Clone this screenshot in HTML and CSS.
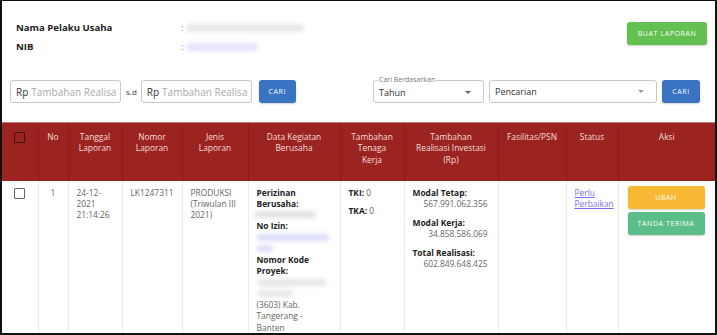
FILE: index.html
```html
<!DOCTYPE html>
<html lang="id">
<head>
    <meta charset="UTF-8">
    <meta name="viewport" content="width=device-width, initial-scale=1.0">
    <title>Laporan Kegiatan Penanaman Modal</title>
    <link rel="stylesheet" href="styles.css">
</head>
<body>
    <div class="frame">
        <div class="top">
            <div class="info">
                <div class="info-row">
                    <span class="info-label">Nama Pelaku Usaha</span>
                    <span class="info-colon">:</span>
                    <span class="bar bar-name"></span>
                </div>
                <div class="info-row">
                    <span class="info-label">NIB</span>
                    <span class="info-colon">:</span>
                    <span class="bar bar-nib"></span>
                </div>
            </div>
            <button class="btn btn-green btn-buat">BUAT LAPORAN</button>
        </div>

        <div class="filters">
            <div class="filter-left">
                <div class="money">
                    <span class="rp">Rp</span>
                    <input type="text" placeholder="Tambahan Realisasi">
                </div>
                <span class="sd">s.d</span>
                <div class="money">
                    <span class="rp">Rp</span>
                    <input type="text" placeholder="Tambahan Realisasi">
                </div>
                <button class="btn btn-blue">CARI</button>
            </div>
            <div class="filter-right">
                <fieldset class="select select-tahun">
                    <legend>Cari Berdasarkan</legend>
                    <span>Tahun</span>
                    <span class="caret caret-dark"></span>
                </fieldset>
                <div class="select select-cari">
                    <span>Pencarian</span>
                    <span class="caret"></span>
                </div>
                <button class="btn btn-blue btn-cari2">CARI</button>
            </div>
        </div>

        <table class="report">
            <colgroup>
                <col style="width: 36px">
                <col style="width: 30px">
                <col style="width: 54px">
                <col style="width: 60px">
                <col style="width: 66px">
                <col style="width: 92px">
                <col style="width: 64px">
                <col style="width: 94px">
                <col style="width: 68px">
                <col style="width: 52px">
                <col>
            </colgroup>
            <thead>
                <tr>
                    <th><span class="check check-head"></span></th>
                    <th>No</th>
                    <th>Tanggal<br>Laporan</th>
                    <th>Nomor<br>Laporan</th>
                    <th>Jenis<br>Laporan</th>
                    <th>Data Kegiatan<br>Berusaha</th>
                    <th>Tambahan<br>Tenaga<br>Kerja</th>
                    <th>Tambahan<br>Realisasi Investasi<br>(Rp)</th>
                    <th>Fasilitas/PSN</th>
                    <th>Status</th>
                    <th>Aksi</th>
                </tr>
            </thead>
            <tbody>
                <tr>
                    <td><span class="check"></span></td>
                    <td class="center">1</td>
                    <td>24-12-<br>2021<br>21:14:26</td>
                    <td>LK1247311</td>
                    <td>PRODUKSI (Triwulan III 2021)</td>
                    <td>
                        <b>Perizinan<br>Berusaha:</b>
                        <span class="line"><span class="bar bar-izin"></span></span>
                        <b>No Izin:</b>
                        <span class="line"><span class="bar bar-link"></span></span>
                        <span class="line"><span class="bar bar-link2"></span></span>
                        <b>Nomor Kode<br>Proyek:</b>
                        <span class="line"><span class="bar bar-kode"></span></span>
                        <span class="line"><span class="bar bar-kode2"></span></span>
                        <span class="place">(3603) Kab.<br>Tangerang -<br>Banten</span>
                    </td>
                    <td>
                        <div><b>TKI:</b> 0</div>
                        <div class="gap"><b>TKA:</b> 0</div>
                    </td>
                    <td>
                        <b>Modal Tetap:</b>
                        <div class="num">567.991.062.356</div>
                        <b class="gap">Modal Kerja:</b>
                        <div class="num">34.858.586.069</div>
                        <b class="gap">Total Realisasi:</b>
                        <div class="num">602.849.648.425</div>
                    </td>
                    <td></td>
                    <td><a href="#" class="status">Perlu Perbaikan</a></td>
                    <td class="actions">
                        <button class="btn btn-yellow">UBAH</button>
                        <button class="btn btn-teal">TANDA TERIMA</button>
                    </td>
                </tr>
            </tbody>
        </table>
    </div>
</body>
</html>
```

FILE: styles.css
```css
/* Page frame */
html, body {
    margin: 0;
    height: 100%;
}

body {
    font-family: "Open Sans", "Liberation Sans", sans-serif;
    color: #555;
    background: #fff;
}

.frame {
    box-sizing: border-box;
    height: 335px;
    border: 2px solid #111;
    border-top-width: 1px;
    overflow: hidden;
    background: #fff;
}

/* Business info */
.top {
    display: flex;
    justify-content: space-between;
    padding: 17px 8px 0 14px;
    height: 51px;
}

.info-row {
    display: flex;
    align-items: center;
    height: 19px;
    font-size: 9.6px;
}

.info-label {
    width: 165px;
    font-weight: 700;
    color: #222;
}

.info-colon {
    width: 5px;
    color: #888;
}

/* blurred (hidden) values */
.bar {
    display: inline-block;
    height: 8px;
    border-radius: 4px;
    filter: blur(2px);
    background: #e2e2e2;
}

.bar-name {
    width: 118px;
    background: #e6e6e6;
}

.bar-nib {
    width: 72px;
    background: #e3e3fb;
}

/* Buttons */
.btn {
    border: none;
    border-radius: 3px;
    color: #fff;
    font-family: inherit;
    font-size: 7px;
    letter-spacing: 0.6px;
    cursor: pointer;
    box-shadow: 0 1px 2px rgba(0, 0, 0, 0.2);
}

.btn-green {
    background: #62c150;
}

.btn-buat {
    width: 80px;
    height: 23px;
    margin-top: 4px;
}

.btn-blue {
    background: #3a73c2;
    width: 37px;
    height: 23px;
}

.btn-yellow {
    background: #f7b833;
}

.btn-teal {
    background: #5bbd87;
}

/* Filters */
.filters {
    display: flex;
    justify-content: space-between;
    align-items: flex-end;
    padding: 10px 15px 0 8px;
    height: 24px;
}

.filter-left, .filter-right {
    display: flex;
    align-items: center;
}

.money {
    display: flex;
    align-items: center;
    box-sizing: border-box;
    width: 111px;
    height: 23px;
    border: 1px solid #c8c8c8;
    border-radius: 3px;
    padding-left: 5px;
    overflow: hidden;
}

.rp {
    font-size: 10px;
    color: #333;
    margin-right: 3px;
}

.money input {
    border: none;
    outline: none;
    padding: 0;
    width: 86px;
    font-family: inherit;
    font-size: 10px;
    color: #333;
}

.money input::placeholder {
    color: #aaa;
}

.sd {
    font-size: 8px;
    margin: 0 4px 0 5px;
    color: #444;
}

.filter-left .btn-blue {
    margin-left: 7px;
}

.select {
    display: flex;
    align-items: center;
    justify-content: space-between;
    box-sizing: border-box;
    height: 23px;
    margin: 0;
    border: 1px solid #c8c8c8;
    border-radius: 3px;
    padding: 0 12px 0 5px;
    font-size: 9px;
    color: #333;
}

fieldset.select {
    position: relative;
    min-width: 0;
}

.select legend {
    position: absolute;
    top: -5px;
    left: 4px;
    padding: 0 1px;
    background: #fff;
    font-size: 7px;
    line-height: 8px;
    color: #777;
}

.select-tahun {
    width: 111px;
    padding-top: 2px;
}

.select-cari {
    width: 168px;
    margin-left: 5px;
}

.caret {
    width: 0;
    height: 0;
    border-left: 3px solid transparent;
    border-right: 3px solid transparent;
    border-top: 3px solid #999;
}

.caret-dark {
    border-top-color: #666;
}

.btn-cari2 {
    margin-left: 5px;
    width: 38px;
}

/* Table */
.report {
    margin-top: 19px;
    width: 713px;
    border-collapse: collapse;
    table-layout: fixed;
    font-size: 8.4px;
    line-height: 11.25px;
}

.report th {
    background: #9b2420;
    color: #f5dedc;
    font-weight: 400;
    text-align: center;
    vertical-align: top;
    height: 58px;
    padding: 8px 2px 0;
    box-sizing: border-box;
    border-left: 1px solid #8a1d1a;
    border-top: 1px solid #c97a76;
}

.report th:first-child {
    border-left: none;
}

.report td {
    vertical-align: top;
    padding: 6px 8px 0;
    border-left: 1px solid #ebebeb;
    color: #666;
}

.report td:first-child {
    border-left: none;
    text-align: center;
    padding: 7px 0 0;
}

.report td.center {
    text-align: center;
}

.report b {
    display: block;
    color: #222;
    font-weight: 700;
}

.report td div b {
    display: inline;
}

.report .gap {
    margin-top: 7.5px;
}

.check {
    display: inline-block;
    box-sizing: border-box;
    width: 11px;
    height: 11px;
    border: 1px solid #666;
    border-radius: 1px;
}

.check-head {
    border-color: #4a0f0d;
    margin-top: 1px;
}

/* one text line holding a blurred value */
.line {
    display: block;
    box-sizing: border-box;
    height: 11.25px;
    padding-top: 2px;
}

.line .bar {
    display: block;
    height: 7px;
}

.bar-izin {
    width: 62px;
    margin-left: -3px;
}

.bar-link {
    width: 72px;
    background: #dcdcfb;
}

.bar-link2 {
    width: 16px;
    background: #dcdcfb;
}

.bar-kode {
    width: 70px;
    background: #e6e6e6;
}

.bar-kode2 {
    width: 36px;
    background: #e6e6e6;
}

.place {
    display: block;
}

.num {
    text-align: right;
    padding-right: 2px;
}

.status {
    color: #7a6ff0;
}

.actions {
    padding: 5px 9px 0 9px !important;
}

.actions .btn {
    display: block;
    width: 77px;
    height: 23px;
    margin-bottom: 3px;
}
```
